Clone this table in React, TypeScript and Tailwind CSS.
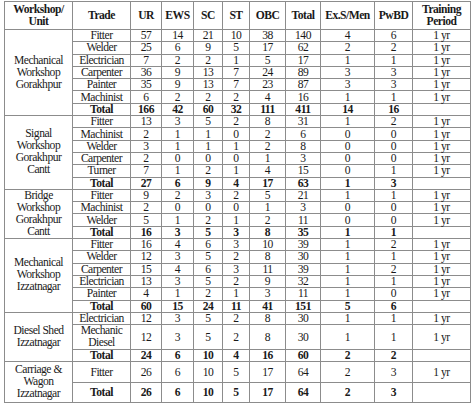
import { Fragment } from "react";

type Row = { trade: string[]; vals: number[]; h?: string };

interface Group {
  name: string[];
  rows: Row[];
  total: number[];
  totalH?: string;
}

const groups: Group[] = [
  {
    name: ["Mechanical", "Workshop", "Gorakhpur"],
    rows: [
      { trade: ["Fitter"], vals: [57, 14, 21, 10, 38, 140, 4, 6] },
      { trade: ["Welder"], vals: [25, 6, 9, 5, 17, 62, 2, 2] },
      { trade: ["Electrician"], vals: [7, 2, 2, 1, 5, 17, 1, 1] },
      { trade: ["Carpenter"], vals: [36, 9, 13, 7, 24, 89, 3, 3] },
      { trade: ["Painter"], vals: [35, 9, 13, 7, 23, 87, 3, 3] },
      { trade: ["Machinist"], vals: [6, 2, 2, 2, 4, 16, 1, 1] },
    ],
    total: [166, 42, 60, 32, 111, 411, 14, 16],
  },
  {
    name: ["Signal", "Workshop", "Gorakhpur", "Cantt"],
    rows: [
      { trade: ["Fitter"], vals: [13, 3, 5, 2, 8, 31, 1, 2] },
      { trade: ["Machinist"], vals: [2, 1, 1, 0, 2, 6, 0, 0] },
      { trade: ["Welder"], vals: [3, 1, 1, 1, 2, 8, 0, 0] },
      { trade: ["Carpenter"], vals: [2, 0, 0, 0, 1, 3, 0, 0] },
      { trade: ["Turner"], vals: [7, 1, 2, 1, 4, 15, 0, 1] },
    ],
    total: [27, 6, 9, 4, 17, 63, 1, 3],
  },
  {
    name: ["Bridge", "Workshop", "Gorakhpur", "Cantt"],
    rows: [
      { trade: ["Fitter"], vals: [9, 2, 3, 2, 5, 21, 1, 1] },
      { trade: ["Machinist"], vals: [2, 0, 0, 0, 1, 3, 0, 0] },
      { trade: ["Welder"], vals: [5, 1, 2, 1, 2, 11, 0, 0] },
    ],
    total: [16, 3, 5, 3, 8, 35, 1, 1],
  },
  {
    name: ["Mechanical", "Workshop", "Izzatnagar"],
    rows: [
      { trade: ["Fitter"], vals: [16, 4, 6, 3, 10, 39, 1, 2] },
      { trade: ["Welder"], vals: [12, 3, 5, 2, 8, 30, 1, 1] },
      { trade: ["Carpenter"], vals: [15, 4, 6, 3, 11, 39, 1, 2] },
      { trade: ["Electrician"], vals: [13, 3, 5, 2, 9, 32, 1, 1] },
      { trade: ["Painter"], vals: [4, 1, 2, 1, 3, 11, 1, 0] },
    ],
    total: [60, 15, 24, 11, 41, 151, 5, 6],
  },
  {
    name: ["Diesel Shed", "Izzatnagar"],
    rows: [
      { trade: ["Electrician"], vals: [12, 3, 5, 2, 8, 30, 1, 1] },
      { trade: ["Mechanic", "Diesel"], vals: [12, 3, 5, 2, 8, 30, 1, 1], h: "h-[25px]" },
    ],
    total: [24, 6, 10, 4, 16, 60, 2, 2],
  },
  {
    name: ["Carriage &", "Wagon", "Izzatnagar"],
    rows: [{ trade: ["Fitter"], vals: [26, 6, 10, 5, 17, 64, 2, 3], h: "h-[20.5px]" }],
    total: [26, 6, 10, 5, 17, 64, 2, 3],
    totalH: "h-[20px]",
  },
];

const headers = ["UR", "EWS", "SC", "ST", "OBC", "Total", "Ex.S/Men", "PwBD"];
const widths = ["w-[68px]", "w-[58px]", "w-[31px]", "w-[32px]", "w-[29px]", "w-[27px]", "w-[36px]", "w-[35px]", "w-[54px]", "w-[38px]", "w-[58px]"];

const cell = "border border-[#8c8c8c] p-0 text-center align-middle";

// multi-line cells get a looser line box so the lines don't touch
function Lines({ lines }: { lines: string[] }) {
  return (
    <>
      {lines.map((l, i) => (
        <span key={i} className={lines.length > 1 ? "block leading-[12px]" : "block"}>
          {l}
        </span>
      ))}
    </>
  );
}

export default function App() {
  return (
    <div className="w-[474px] h-[409px] bg-white pt-px pl-1">
      <table
        className="w-[466px] table-fixed border-collapse text-[11.6px] leading-[11px] tracking-[-0.5px] text-[#1a1a1a]"
        style={{ fontFamily: '"Liberation Serif", "Times New Roman", serif' }}
      >
        <colgroup>
          {widths.map((w, i) => (
            <col key={i} className={w} />
          ))}
        </colgroup>
        <thead>
          <tr className="h-[28px] font-bold">
            <th className={cell}>
              <Lines lines={["Workshop/", "Unit"]} />
            </th>
            <th className={cell}>Trade</th>
            {headers.map((h) => (
              <th key={h} className={cell}>
                {h}
              </th>
            ))}
            <th className={cell}>
              <Lines lines={["Training", "Period"]} />
            </th>
          </tr>
        </thead>
        <tbody>
          {groups.map((g, gi) => (
            <Fragment key={gi}>
              {g.rows.map((r, ri) => (
                <tr key={ri} className={r.h ?? "h-[12.3px]"}>
                  {ri === 0 && (
                    <td rowSpan={g.rows.length + 1} className={cell}>
                      <Lines lines={g.name} />
                    </td>
                  )}
                  <td className={cell}>
                    <Lines lines={r.trade} />
                  </td>
                  {r.vals.map((v, vi) => (
                    <td key={vi} className={cell}>
                      {v}
                    </td>
                  ))}
                  <td className={cell}>1 yr</td>
                </tr>
              ))}
              <tr className={`${g.totalH ?? "h-[12.3px]"} font-bold`}>
                <td className={cell}>Total</td>
                {g.total.map((v, vi) => (
                  <td key={vi} className={cell}>
                    {v}
                  </td>
                ))}
                <td className={cell}></td>
              </tr>
            </Fragment>
          ))}
        </tbody>
      </table>
    </div>
  );
}
